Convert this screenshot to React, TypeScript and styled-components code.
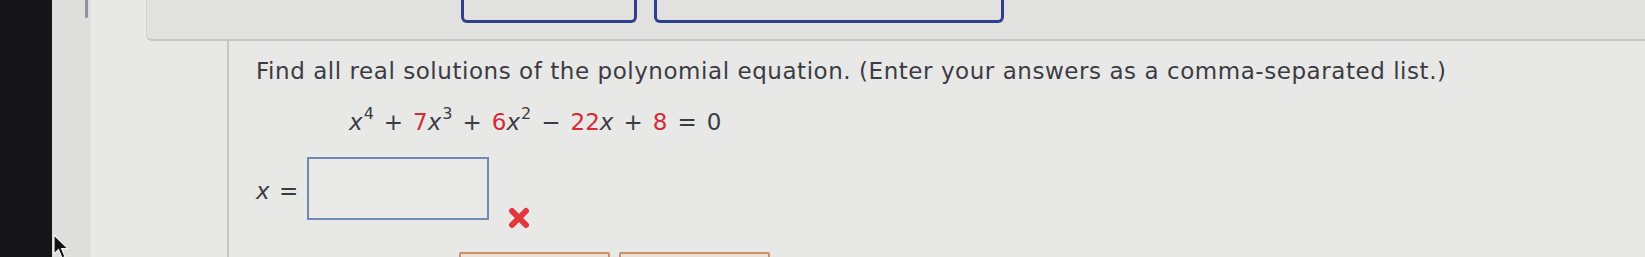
import React from "react";
import styled, { createGlobalStyle } from "styled-components";

const colors = {
  bezel: "#151517",
  strip: "#dededc",
  page: "#e8e8e6",
  panel: "#e1e1df",
  rule: "#c6c6c4",
  ink: "#3b3b44",
  red: "#d12c38",
  navy: "#2f3f8c",
  field: "#7189b3",
  tan: "#c79070",
};

const GlobalStyle = createGlobalStyle`
  html, body {
    margin: 0;
    padding: 0;
    overflow: hidden;
    background: ${colors.page};
    font-family: "DejaVu Sans", Verdana, sans-serif;
  }
`;

const Screen = styled.div`
  position: relative;
  display: flex;
  width: 1645px;
  height: 257px;
  overflow: hidden;
`;

const Bezel = styled.div`
  width: 52px;
  flex-shrink: 0;
  background-color: ${colors.bezel};
`;

const SideStrip = styled.div`
  width: 38px;
  flex-shrink: 0;
  background-color: ${colors.strip};
  border-right: 1px solid #d6d6d4;
  box-sizing: border-box;
  padding-left: 33px;
`;

const ScrollThumb = styled.div`
  width: 3px;
  height: 18px;
  background-color: #8d92a3;
  border-radius: 0 0 2px 2px;
`;

const Main = styled.div`
  flex: 1;
  min-height: 0;
  display: flex;
  flex-direction: column;
`;

const TopBar = styled.div`
  display: flex;
  flex-shrink: 0;
  height: 41px;
  padding-left: 56px;
`;

const ToolPanel = styled.div`
  flex: 1;
  display: flex;
  gap: 17px;
  padding-left: 314px;
  background-color: ${colors.panel};
  border-left: 1px solid #d2d2d0;
  border-bottom: 2px solid ${colors.rule};
  border-bottom-left-radius: 6px;
`;

const ToolButton = styled.div<{ $width: number }>`
  width: ${(p) => p.$width}px;
  height: 20px;
  box-sizing: content-box;
  border: 3px solid ${colors.navy};
  border-top: none;
  border-radius: 0 0 6px 6px;
`;

const Body = styled.div`
  flex: 1;
  min-height: 0;
  display: flex;
  padding-left: 137px;
`;

const QuestionPane = styled.div`
  flex: 1;
  border-left: 2px solid ${colors.rule};
  padding: 17px 0 0 27px;
  color: ${colors.ink};
  font-size: 23px;
  line-height: 26px;
`;

const Prompt = styled.div`
  white-space: nowrap;
  letter-spacing: 0.55px;
`;

const Equation = styled.div`
  margin: 25px 0 0 93px;
  white-space: nowrap;
`;

const Var = styled.i`
  font-style: italic;
`;

const Coef = styled.span`
  color: ${colors.red};
`;

const Op = styled.span`
  padding: 0 10px;
`;

const Sup = styled.sup`
  font-size: 16px;
  line-height: 0;
  vertical-align: 11px;
  padding-left: 1px;
`;

const AnswerRow = styled.div`
  display: flex;
  align-items: center;
  margin-top: 22px;
`;

const AnswerLabel = styled.span`
  margin-right: 8px;
  padding-top: 4px;
  letter-spacing: 1px;
`;

const AnswerBox = styled.div`
  width: 178px;
  height: 59px;
  border: 2px solid ${colors.field};
  background-color: #e9e9e8;
`;

const WrongMark = styled.svg`
  align-self: flex-end;
  margin: 0 0 -10px 18px;
  width: 24px;
  height: 24px;
`;

const ButtonRow = styled.div`
  display: flex;
  gap: 9px;
  margin: 32px 0 0 203px;
`;

const ActionButton = styled.div`
  width: 147px;
  height: 30px;
  border: 2px solid ${colors.tan};
  border-radius: 2px;
  background-color: #ecdfd2;
`;

const Pointer = styled.svg`
  position: absolute;
  left: 53px;
  top: 234px;
  width: 18px;
  height: 26px;
`;

const App: React.FC = () => {
  return (
    <>
      <GlobalStyle />
      <Screen>
        <Bezel />
        <SideStrip>
          <ScrollThumb />
        </SideStrip>
        <Main>
          <TopBar>
            <ToolPanel>
              <ToolButton $width={170} />
              <ToolButton $width={344} />
            </ToolPanel>
          </TopBar>
          <Body>
            <QuestionPane>
              <Prompt>
                Find all real solutions of the polynomial equation. (Enter your answers as a
                comma-separated list.)
              </Prompt>
              <Equation>
                <Var>x</Var>
                <Sup>4</Sup>
                <Op>+</Op>
                <Coef>7</Coef>
                <Var>x</Var>
                <Sup>3</Sup>
                <Op>+</Op>
                <Coef>6</Coef>
                <Var>x</Var>
                <Sup>2</Sup>
                <Op>−</Op>
                <Coef>22</Coef>
                <Var>x</Var>
                <Op>+</Op>
                <Coef>8</Coef>
                <Op>=</Op>
                <span>0</span>
              </Equation>
              <AnswerRow>
                <AnswerLabel>
                  <Var>x</Var> =
                </AnswerLabel>
                <AnswerBox />
                <WrongMark viewBox="0 0 24 24">
                  <path
                    d="M5 5 L19 19 M19 5 L5 19"
                    stroke="#e2363f"
                    strokeWidth="6"
                    strokeLinecap="round"
                    fill="none"
                  />
                </WrongMark>
              </AnswerRow>
              <ButtonRow>
                <ActionButton />
                <ActionButton />
              </ButtonRow>
            </QuestionPane>
          </Body>
        </Main>
        <Pointer viewBox="0 0 18 26">
          <path
            d="M1 1 L1 20 L5.5 15.5 L9 24 L12 22.7 L8.6 14.6 L15 14.6 Z"
            fill="#111"
            stroke="#f2f2f2"
            strokeWidth="1.2"
          />
        </Pointer>
      </Screen>
    </>
  );
};

export default App;
